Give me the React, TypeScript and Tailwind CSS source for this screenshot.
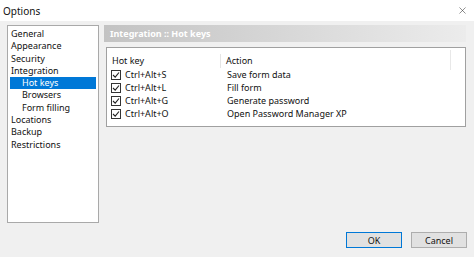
import { X } from "lucide-react";

const tree = [
  { label: "General", depth: 0 },
  { label: "Appearance", depth: 0 },
  { label: "Security", depth: 0 },
  { label: "Integration", depth: 0 },
  { label: "Hot keys", depth: 1, selected: true },
  { label: "Browsers", depth: 1 },
  { label: "Form filling", depth: 1 },
  { label: "Locations", depth: 0 },
  { label: "Backup", depth: 0 },
  { label: "Restrictions", depth: 0 },
];

const hotkeys = [
  { key: "Ctrl+Alt+S", action: "Save form data" },
  { key: "Ctrl+Alt+L", action: "Fill form" },
  { key: "Ctrl+Alt+G", action: "Generate password" },
  { key: "Ctrl+Alt+O", action: "Open Password Manager XP" },
];

const Check = () => (
  <span className="flex h-[10px] w-[10px] items-center justify-center border border-[#333] bg-white">
    <svg width="8" height="8" viewBox="0 0 8 8" fill="none">
      <path d="M1 4L3.2 6.2L7 1.5" stroke="#222" strokeWidth="1.1" />
    </svg>
  </span>
);

const App = () => {
  return (
    <div
      className="flex h-[257px] w-[474px] flex-col bg-white text-[9px] text-[#111]"
      style={{ fontFamily: '"Noto Sans", "Open Sans", sans-serif' }}
    >
      <div className="flex h-[21px] items-center justify-between pl-[3px] pr-[6px]">
        <span className="text-[10px] leading-none">Options</span>
        <X className="size-[11px] text-[#333]" strokeWidth={1.2} />
      </div>
      <div className="flex flex-1 flex-col bg-[#f0f0f0] px-[7px] pb-[9px] pt-[4px]">
        <div className="flex gap-[5px]">
          <div className="h-[198px] w-[92px] border border-[#a9a9a9] bg-white px-[2px] pt-[2px]">
            {tree.map((t) => (
              <div
                key={t.label}
                className={`h-[12.3px] leading-[12.3px] ${
                  t.selected ? "bg-[#0078d7] text-white" : ""
                } ${t.depth ? "pl-[12px]" : "pl-[1px]"}`}
              >
                {t.label}
              </div>
            ))}
          </div>
          <div className="flex flex-1 flex-col pr-[1px]">
            <div className="flex h-[17px] items-center bg-gradient-to-r from-[#c3c3c3] to-[#ececec] pl-[6px] text-[9px] font-bold text-white">
              Integration :: Hot keys
            </div>
            <div className="relative ml-[2px] mt-[5px] h-[80px] border border-[#a0a0a0] bg-white pt-[6px]">
              <div className="absolute right-[14px] top-[2px] h-[20px] w-px bg-[#e8e8e8]" />
              <div className="flex h-[14px] items-center">
                <div className="w-[114px] border-r border-[#e5e5e5] pl-[5px]">Hot key</div>
                <div className="pl-[5px]">Action</div>
              </div>
              {hotkeys.map((h) => (
                <div key={h.key} className="flex h-[13px] items-center">
                  <div className="flex w-[114px] items-center gap-[4px] pl-[4px]">
                    <Check />
                    <span>{h.key}</span>
                  </div>
                  <div className="pl-[6px]">{h.action}</div>
                </div>
              ))}
            </div>
          </div>
        </div>
        <div className="mt-auto flex justify-end gap-[9px] pr-[0px]">
          <button className="h-[16px] w-[56px] border border-[#0078d7] bg-[#e1e1e1] text-[9px] leading-none">
            OK
          </button>
          <button className="h-[16px] w-[56px] border border-[#adadad] bg-[#e1e1e1] text-[9px] leading-none">
            Cancel
          </button>
        </div>
      </div>
    </div>
  );
};

export default App;
